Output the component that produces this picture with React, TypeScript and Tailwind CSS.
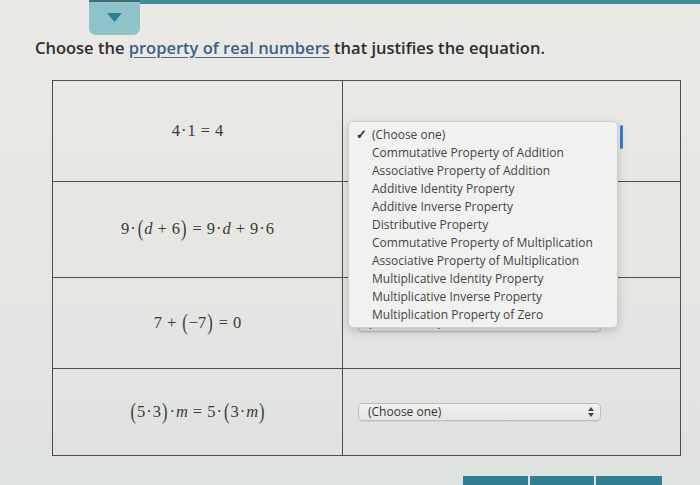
import React from "react";

const items = [
  "(Choose one)",
  "Commutative Property of Addition",
  "Associative Property of Addition",
  "Additive Identity Property",
  "Additive Inverse Property",
  "Distributive Property",
  "Commutative Property of Multiplication",
  "Associative Property of Multiplication",
  "Multiplicative Identity Property",
  "Multiplicative Inverse Property",
  "Multiplication Property of Zero",
];

function Arrows() {
  return (
    <svg width="6" height="10" viewBox="0 0 6 10">
      <path d="M0 4L3 0L6 4Z" fill="#444" />
      <path d="M0 6L3 10L6 6Z" fill="#444" />
    </svg>
  );
}

function Select({ hidden }: { hidden?: boolean }) {
  return (
    <div
      className={`ml-[15px] w-[243px] h-[18px] rounded-[4px] border border-[#bcbcbc] bg-gradient-to-b from-[#f1f0ee] to-[#e6e5e3] flex items-center justify-between pl-[9px] pr-[6px] text-[12px] leading-none text-[#333] shadow-[0_1px_1px_rgba(0,0,0,0.06)] ${
        hidden ? "invisible" : ""
      }`}
    >
      <span>(Choose one)</span>
      <Arrows />
    </div>
  );
}

function P({ children }: { children: React.ReactNode }) {
  return <span className="inline-block scale-y-[1.35] mx-[1px]">{children}</span>;
}

function V({ children }: { children: React.ReactNode }) {
  return <span className="italic">{children}</span>;
}

function O({ children }: { children: React.ReactNode }) {
  return <span className="mx-[5px]">{children}</span>;
}

function D() {
  return <span className="mx-[1px]">·</span>;
}

function Row({ h, eq, last, hidden }: { h: string; eq: React.ReactNode; last?: boolean; hidden?: boolean }) {
  return (
    <div className={`flex ${h} ${last ? "" : "border-b border-[#4e4e4e]"}`}>
      <div className="w-[290px] border-r border-[#4e4e4e] flex items-center justify-center font-['Liberation_Serif',serif] text-[16.5px] text-[#3a3a3a]">
        {eq}
      </div>
      <div className="flex-1 flex items-center">
        <Select hidden={hidden} />
      </div>
    </div>
  );
}

export default function App() {
  return (
    <div className="relative w-[700px] h-[485px] overflow-hidden bg-gradient-to-b from-[#ebe9e6] via-[#e7e6e3] to-[#dee2e0] font-['Open_Sans',sans-serif] text-[#333]">
      <div className="flex items-start">
        <div className="w-[89px]" />
        <div className="w-[51px] h-[35px] rounded-b-[7px] bg-[#8ec4c9] border-t-[2px] border-[#3f6c75] flex justify-center pt-[11px]">
          <svg width="15" height="9" viewBox="0 0 15 9">
            <path d="M0 0H15L7.5 9Z" fill="#2b8096" />
          </svg>
        </div>
        <div className="flex-1 h-[4px] bg-[#3f8e99]" />
      </div>

      <div className="pl-[35px] mt-[3px] h-[20px] leading-[20px] text-[16.5px] font-semibold text-[#2e2e2e]">
        Choose the{" "}
        <span className="text-[#3b5f86] underline underline-offset-[3px] decoration-[#4a6a8f]">property of real numbers</span>{" "}
        that justifies the equation.
      </div>

      <div className="ml-[52px] mt-[22px] w-[629px] border border-[#4e4e4e]">
        <Row
          h="h-[101px]"
          hidden
          eq={
            <span>
              4<D />1<O>=</O>4
            </span>
          }
        />
        <Row
          h="h-[96px]"
          hidden
          eq={
            <span>
              9<D />
              <P>(</P>
              <V>d</V>
              <O>+</O>6<P>)</P>
              <O>=</O>9<D />
              <V>d</V>
              <O>+</O>9<D />6
            </span>
          }
        />
        <Row
          h="h-[91px]"
          eq={
            <span>
              7<O>+</O>
              <P>(</P>−7<P>)</P>
              <O>=</O>0
            </span>
          }
        />
        <Row
          h="h-[86px]"
          last
          eq={
            <span>
              <P>(</P>5<D />3<P>)</P>
              <D />
              <V>m</V>
              <O>=</O>5<D />
              <P>(</P>3<D />
              <V>m</V>
              <P>)</P>
            </span>
          }
        />
      </div>

      <div className="ml-[463px] mt-[20px] flex gap-[2px]">
        <div className="w-[65px] h-[12px] bg-[#2f7e92]" />
        <div className="w-[64px] h-[12px] bg-[#2f7e92]" />
        <div className="w-[66px] h-[12px] bg-[#2f7e92]" />
      </div>

      <div className="absolute left-[620px] top-[125px] w-[3px] h-[24px] rounded-full bg-[#3d78d8]" />

      <div className="absolute left-[348px] top-[121px] w-[270px] h-[207px] rounded-[5px] border border-[#cfcfcf] bg-[#f1f1f0] shadow-[0_3px_10px_rgba(0,0,0,0.18)] pt-[4px] text-[12px] text-[#444]">
        {items.map((t, i) => (
          <div key={t} className="h-[18px] flex items-center">
            <span className="w-[23px] pl-[7px] text-[13px] font-bold text-[#333]">{i === 0 ? "✓" : ""}</span>
            <span>{t}</span>
          </div>
        ))}
      </div>
    </div>
  );
}
